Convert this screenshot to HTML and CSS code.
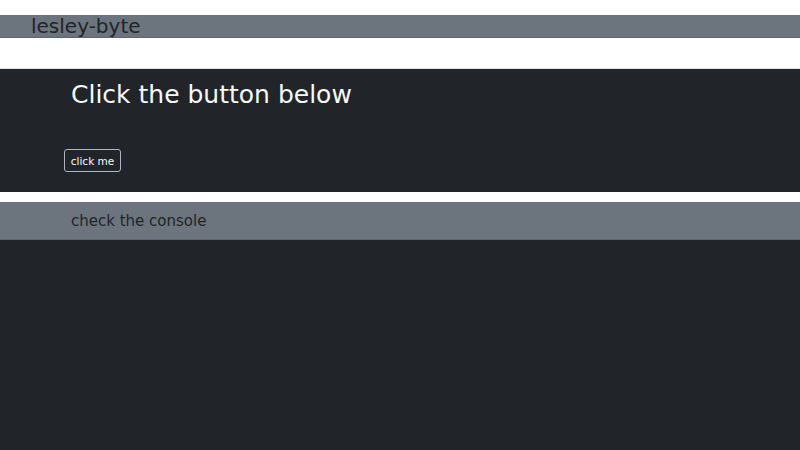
FILE: index.html
```html
<!DOCTYPE html>
<html lang="en">
<head>
  <meta charset="UTF-8">
  <title>lesley-byte</title>
  <meta name="viewport" content="width=device-width, initial-scale=1.0">
  <link rel="stylesheet" href="styles.css">
</head>
<body>
  <header class="top">
    <div class="brand-bar">lesley-byte</div>
  </header>

  <section class="hero">
    <h1>Click the button below</h1>
    <button class="btn-outline" onclick="console.log('clicked')">click me</button>
  </section>

  <div class="note-bar">check the console</div>

  <main class="rest"></main>
</body>
</html>
```

FILE: styles.css
```css
html, body {
  margin: 0;
  padding: 0;
}
body {
  font-family: 'DejaVu Sans', 'Liberation Sans', sans-serif;
  background-color: #212529;
  color: #212529;
}
.top {
  background-color: #fff;
  padding: 15px 0 30px;
}
.brand-bar {
  background-color: #6c757d;
  border-bottom: 1px solid #5f676e;
  height: 22px;
  line-height: 22px;
  font-size: 20px;
  padding-left: 31px;
}
.hero {
  background-color: #212529;
  border-top: 1px solid #dee2e6;
  height: 124px;
  box-sizing: border-box;
  padding: 11px 0 0 64px;
}
.hero h1 {
  margin: 0 0 0 7px;
  font-weight: normal;
  font-size: 25px;
  line-height: 30px;
  color: #f8f9fa;
}
.btn-outline {
  margin-top: 39px;
  height: 23px;
  width: 57px;
  padding: 0;
  font-family: inherit;
  font-size: 10.5px;
  color: #f8f9fa;
  background: transparent;
  border: 1px solid #adb5bd;
  border-radius: 3px;
  cursor: pointer;
}
.note-bar {
  border-top: 10px solid #fff;
  background-color: #6c757d;
  border-bottom: 1px solid #5f676e;
  height: 36px;
  padding-top: 1px;
  line-height: 37px;
  font-size: 15px;
  padding-left: 71px;
}
.rest {
  min-height: 210px;
}
```
